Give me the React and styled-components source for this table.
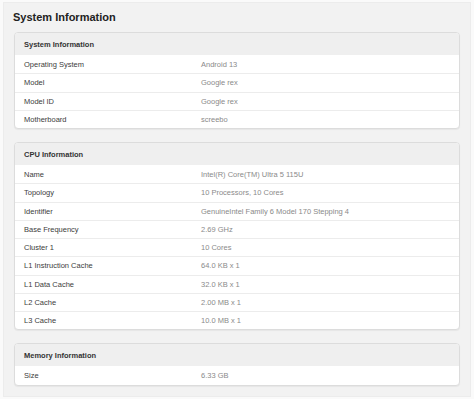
import React from 'react';
import styled, { createGlobalStyle } from 'styled-components';

const sections = [
    {
        title: "System Information",
        rows: [
            ["Operating System", "Android 13"],
            ["Model", "Google rex"],
            ["Model ID", "Google rex"],
            ["Motherboard", "screebo"]
        ]
    },
    {
        title: "CPU Information",
        rows: [
            ["Name", "Intel(R) Core(TM) Ultra 5 115U"],
            ["Topology", "10 Processors, 10 Cores"],
            ["Identifier", "GenuineIntel Family 6 Model 170 Stepping 4"],
            ["Base Frequency", "2.69 GHz"],
            ["Cluster 1", "10 Cores"],
            ["L1 Instruction Cache", "64.0 KB x 1"],
            ["L1 Data Cache", "32.0 KB x 1"],
            ["L2 Cache", "2.00 MB x 1"],
            ["L3 Cache", "10.0 MB x 1"]
        ]
    },
    {
        title: "Memory Information",
        rows: [
            ["Size", "6.33 GB"]
        ]
    }
];

const GlobalStyle = createGlobalStyle`
    html, body {
        margin: 0;
        padding: 0;
        background: #fafafa;
    }
`;

function App() {
    return (
        <>
            <GlobalStyle />
            <Page>
                <Title>System Information</Title>
                {sections.map((section, index) => (
                    <Card key={index}>
                        <CardHeader>{section.title}</CardHeader>
                        {section.rows.map(([label, value], i) => (
                            <Row key={i}>
                                <Label>{label}</Label>
                                <Value>{value}</Value>
                            </Row>
                        ))}
                    </Card>
                ))}
            </Page>
        </>
    );
}

export default App;

const Page = styled.main`
    margin: 2px 3px 2px 3px;
    height: 395px;
    box-sizing: border-box;
    background: #f2f2f2;
    border: 1px solid #ececec;
    padding: 8px 10px 0 10px;
    display: flex;
    flex-direction: column;
    gap: 13px;
    font-family: "Liberation Sans", Arial, sans-serif;
`;

const Title = styled.h1`
    margin: 0 0 -5px -1px;
    font-weight: 700;
    font-size: 11px;
    line-height: 13px;
    color: #222;
`;

const Card = styled.section`
    width: 446px;
    background: #fff;
    border: 1px solid #dcdcdc;
    border-radius: 4px;
    box-shadow: 0 1px 1px rgba(0, 0, 0, 0.05);
    overflow: hidden;
    box-sizing: border-box;
`;

const CardHeader = styled.div`
    height: 22px;
    display: flex;
    align-items: center;
    padding: 0 9px;
    background: #efefef;
    font-weight: 700;
    font-size: 7.5px;
    color: #333;
`;

const Row = styled.div`
    height: 18.25px;
    box-sizing: border-box;
    display: grid;
    grid-template-columns: 177px 1fr;
    align-items: center;
    padding: 0 9px;
    font-size: 7.5px;
    & + & {
        border-top: 1px solid #ececec;
    }
`;

const Label = styled.span`
    color: #3c3c3c;
`;

const Value = styled.span`
    color: #8a8a8a;
`;
